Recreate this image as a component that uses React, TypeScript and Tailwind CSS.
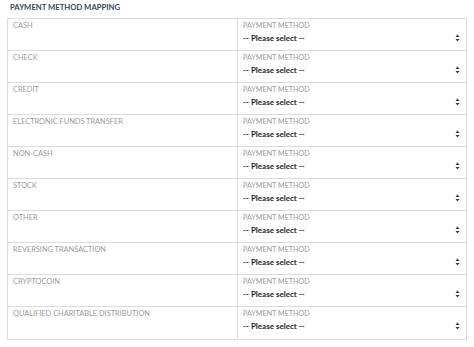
import React from "react";

const items = [
  "CASH",
  "CHECK",
  "CREDIT",
  "ELECTRONIC FUNDS TRANSFER",
  "NON-CASH",
  "STOCK",
  "OTHER",
  "REVERSING TRANSACTION",
  "CRYPTOCOIN",
  "QUALIFIED CHARITABLE DISTRIBUTION",
];

function Arrows() {
  return (
    <svg width="5" height="8" viewBox="0 0 5 8" className="shrink-0">
      <path d="M2.5 0.5 L4.5 3 L0.5 3 Z" fill="#333" />
      <path d="M2.5 7.5 L4.5 5 L0.5 5 Z" fill="#333" />
    </svg>
  );
}

export default function App() {
  return (
    <div
      className="w-[474px] h-[347px] bg-white pl-[7px] pt-[1px]"
      style={{ fontFamily: "Lato, 'Noto Sans', sans-serif" }}
    >
      <div className="text-[7.7px] font-bold text-[#33475b] leading-[10px] pl-[3px] h-[17px] pt-[1px]">
        PAYMENT METHOD MAPPING
      </div>
      <div className="w-[460px] border border-[#dcdcdc]">
        {items.map((it, i) => (
          <div
            key={it}
            className={`flex h-[32px] ${i < items.length - 1 ? "border-b border-[#dcdcdc]" : ""}`}
          >
            <div className="w-[230px] border-r border-[#dcdcdc] px-[5px] pt-[3px]">
              <div className="text-[7.4px] leading-[8px] text-[#9b9b9b]">{it}</div>
            </div>
            <div className="flex-1 px-[5px] pt-[3px]">
              <div className="text-[7.2px] leading-[8px] text-[#9b9b9b]">PAYMENT METHOD</div>
              <div className="flex items-center justify-between mt-[3px] pr-[1px]">
                <span className="text-[8px] leading-[10px] font-bold text-[#1e1e1e]">
                  -- Please select --
                </span>
                <Arrows />
              </div>
            </div>
          </div>
        ))}
      </div>
    </div>
  );
}
